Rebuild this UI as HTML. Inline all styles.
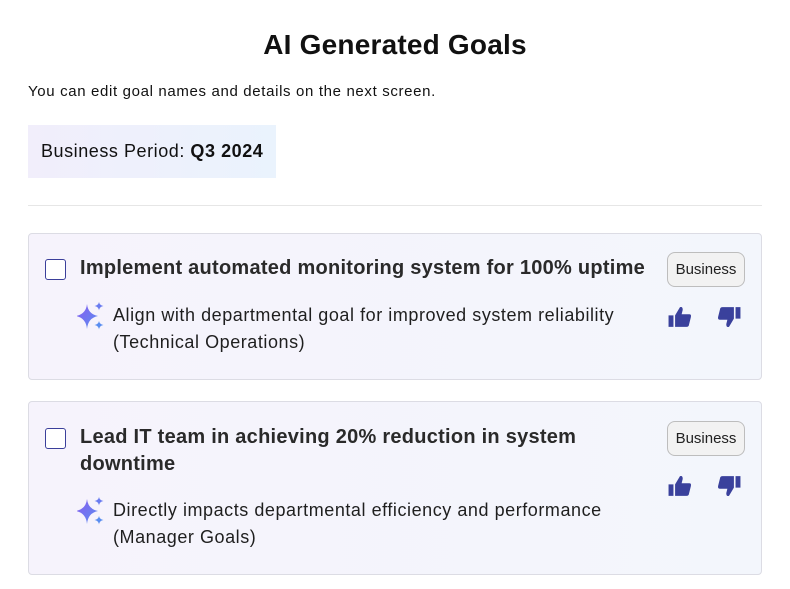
<!DOCTYPE html>
<html><head><style>
*{margin:0;padding:0;box-sizing:border-box}
body{width:790px;height:589px;background:#fff;font-family:"Liberation Sans",sans-serif;color:#1f1f1f;position:relative;overflow:hidden}
.abs{position:absolute;white-space:nowrap}
h1{position:absolute;left:0;width:790px;text-align:center;top:29px;font-size:28px;font-weight:bold;color:#111;letter-spacing:0.2px}
.sub{left:28px;top:83px;font-size:15px;color:#111;letter-spacing:0.65px}
.period{left:28px;top:125px;width:248px;height:53px;background:linear-gradient(90deg,#f1eefb,#eaf3fd);font-size:18px;line-height:53px;padding-left:13px;color:#111;letter-spacing:0.55px}
.hr{left:28px;top:205px;width:734px;height:1px;background:#e6e6e6}
.card{left:28px;width:734px;border:1px solid #dcdce4;border-radius:4px;background:linear-gradient(90deg,#f6f3fc,#f3f6fc)}
.cb{width:21px;height:21px;border:1.5px solid #3b3f9a;border-radius:3px;background:#fff}
.t{font-size:20px;font-weight:bold;color:#2a2a2a;line-height:27px;letter-spacing:0.26px}
.badge{width:78px;height:35px;border:1px solid #bdbdbd;border-radius:8px;background:#f2f2f2;font-size:15px;line-height:33px;text-align:center;color:#222}
.d{font-size:18px;line-height:27px;color:#1f1f1f;letter-spacing:0.55px}
</style></head><body>
<h1>AI Generated Goals</h1>
<div class="abs sub">You can edit goal names and details on the next screen.</div>
<div class="abs period">Business Period: <b>Q3 2024</b></div>
<div class="abs hr"></div>

<div class="abs card" style="top:233px;height:147px"></div>
<div class="abs cb" style="left:45px;top:259px"></div>
<div class="abs t" style="left:80px;top:255px">Implement automated monitoring system for 100% uptime</div>
<div class="abs badge" style="left:667px;top:252px">Business</div>
<svg class="abs" style="left:77px;top:302px" width="28" height="28" viewBox="0 0 28 28"><defs><linearGradient id="g" x1="0" y1="0" x2="1" y2="1"><stop offset="0" stop-color="#8a5cf0"/><stop offset="1" stop-color="#5a8ef0"/></linearGradient></defs><path d="M10 2 Q11 12 21 14 Q11 16 10 27 Q9 16 -1 14 Q9 12 10 2Z" fill="url(#g)"/><path d="M22 0 Q22.6 3.4 26.5 4 Q22.6 4.6 22 8.5 Q21.4 4.6 17.5 4 Q21.4 3.4 22 0Z" fill="#6a7cf0"/><path d="M22 19 Q22.6 22.4 26.5 23 Q22.6 23.6 22 27.5 Q21.4 23.6 17.5 23 Q21.4 22.4 22 19Z" fill="#5a8ef0"/></svg>
<div class="abs d" style="left:113px;top:302px">Align with departmental goal for improved system reliability<br>(Technical Operations)</div>
<svg class="abs" style="left:668px;top:306px" width="24" height="22" viewBox="0 0 22 20"><path d="M0.5 8.5h4.5v10.5H0.5zM6.5 8.5 L11 1 Q13.5 0 13.5 3.5 L12.5 7.5 H19.5 Q21.5 7.5 21 10 L19 18 Q18.5 19 17 19 H6.5Z" fill="#3a419c"/></svg>
<svg class="abs" style="left:717px;top:306px" width="24" height="22" viewBox="0 0 22 20"><g transform="rotate(180 11 10)"><path d="M0.5 8.5h4.5v10.5H0.5zM6.5 8.5 L11 1 Q13.5 0 13.5 3.5 L12.5 7.5 H19.5 Q21.5 7.5 21 10 L19 18 Q18.5 19 17 19 H6.5Z" fill="#3a419c"/></g></svg>

<div class="abs card" style="top:401px;height:174px"></div>
<div class="abs cb" style="left:45px;top:428px"></div>
<div class="abs t" style="left:80px;top:424px">Lead IT team in achieving 20% reduction in system<br>downtime</div>
<div class="abs badge" style="left:667px;top:421px">Business</div>
<svg class="abs" style="left:77px;top:497px" width="28" height="28" viewBox="0 0 28 28"><path d="M10 2 Q11 12 21 14 Q11 16 10 27 Q9 16 -1 14 Q9 12 10 2Z" fill="url(#g)"/><path d="M22 0 Q22.6 3.4 26.5 4 Q22.6 4.6 22 8.5 Q21.4 4.6 17.5 4 Q21.4 3.4 22 0Z" fill="#6a7cf0"/><path d="M22 19 Q22.6 22.4 26.5 23 Q22.6 23.6 22 27.5 Q21.4 23.6 17.5 23 Q21.4 22.4 22 19Z" fill="#5a8ef0"/></svg>
<div class="abs d" style="left:113px;top:497px">Directly impacts departmental efficiency and performance<br>(Manager Goals)</div>
<svg class="abs" style="left:668px;top:475px" width="24" height="22" viewBox="0 0 22 20"><path d="M0.5 8.5h4.5v10.5H0.5zM6.5 8.5 L11 1 Q13.5 0 13.5 3.5 L12.5 7.5 H19.5 Q21.5 7.5 21 10 L19 18 Q18.5 19 17 19 H6.5Z" fill="#3a419c"/></svg>
<svg class="abs" style="left:717px;top:475px" width="24" height="22" viewBox="0 0 22 20"><g transform="rotate(180 11 10)"><path d="M0.5 8.5h4.5v10.5H0.5zM6.5 8.5 L11 1 Q13.5 0 13.5 3.5 L12.5 7.5 H19.5 Q21.5 7.5 21 10 L19 18 Q18.5 19 17 19 H6.5Z" fill="#3a419c"/></g></svg>
</body></html>
